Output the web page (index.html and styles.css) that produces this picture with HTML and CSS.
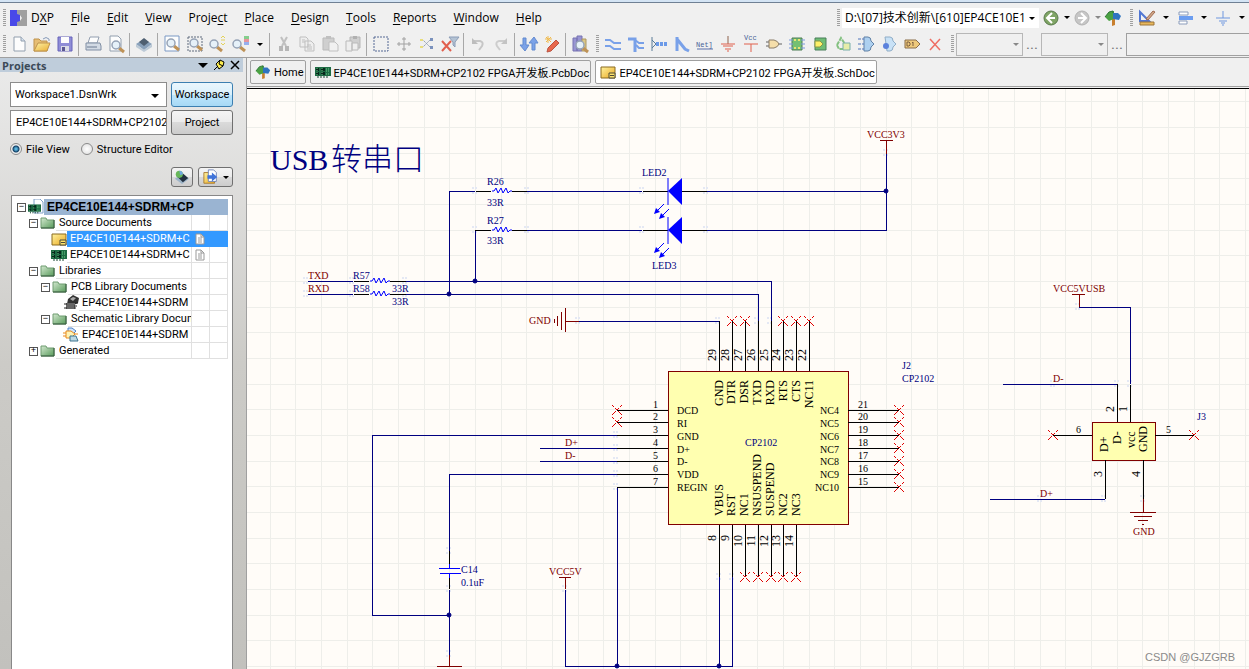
FILE: index.html
```
<!DOCTYPE html>
<html lang="en">
<head>
  <meta charset="UTF-8">
  <meta name="viewport" content="width=device-width, initial-scale=1.0">
  <title>DXP - Schematic Editor</title>
  <link rel="stylesheet" href="styles.css">
</head>
<body>
  <!-- shared symbols -->
  <svg class="defs" aria-hidden="true">
    <defs>
      <linearGradient id="gFolder" x1="0" y1="0" x2="1" y2="1"><stop offset="0" stop-color="#d3e8cf"/><stop offset="1" stop-color="#579a5a"/></linearGradient>
      <linearGradient id="gBlue" x1="0" y1="0" x2="1" y2="1"><stop offset="0" stop-color="#a9cdf8"/><stop offset="1" stop-color="#3f73c9"/></linearGradient>
      <linearGradient id="gYellow" x1="0" y1="0" x2="1" y2="1"><stop offset="0" stop-color="#fff3a0"/><stop offset="1" stop-color="#eaa820"/></linearGradient>
      <symbol id="folder" viewBox="0 0 16 16"><path d="M1 3h5l1 2h7v8H1z" fill="url(#gFolder)" stroke="#6f9c70"/><path d="M1 13h13V5" fill="none" stroke="#33563a"/></symbol>
      <symbol id="sch" viewBox="0 0 16 16"><path d="M1 3h14v11H1z" fill="url(#gYellow)" stroke="#8a6a20"/><path d="M9 9h6v5H9zM10 11.500h4" fill="#ffe36a" stroke="#4b4a3a"/></symbol>
      <symbol id="pcb" viewBox="0 0 16 16"><path d="M0 3h16v9H0z" fill="#1d6b44"/><path d="M1 4h3v3H1zM1 8h3v3H1zM6 4h4v3H6zM6 8h4v3H6z" fill="#07281c"/><path d="M2 4v8M7 4v8M11 5h4M11 7h4M11 10h4" stroke="#6fd08a" stroke-dasharray="1 1"/><path d="M3 12v2M6 12v2M9 12v2M12 12v2" stroke="#16442f"/></symbol>
      <symbol id="page" viewBox="0 0 16 16"><path d="M4 3h5l3 3v7H4z" fill="#fff" stroke="#999"/><path d="M6 7h4M6 9h4M6 11h4M9 3v3h3" fill="none" stroke="#999"/></symbol>
      <symbol id="home" viewBox="0 0 18 18"><path d="M8 9h3v7l-3 1z" fill="#c87f2e"/><path d="M1 8l4-5 5-1v8l-5 2z" fill="#4ba243"/><path d="M9 4h5l3 3-2 4-6-1z" fill="#2f74c0"/><path d="M9 4V2L5 3 1 8" fill="none" stroke="#2c7235"/></symbol>
      <symbol id="lens" viewBox="0 0 18 18"><path d="M11 11l5 4" stroke="#b98847" stroke-width="3"/><circle cx="8" cy="8" r="4" fill="#e5f2fb" stroke="#8d9bb0" stroke-width="1.500"/></symbol>
      <symbol id="chipstack" viewBox="0 0 18 18"><path d="M1 9l8-5 8 5-8 6z" fill="#7d98b5"/><path d="M1 9v3l8 5 8-5V9l-8 6z" fill="#b7c6d4"/><path d="M4 7l5-4 5 4-5 4z" fill="#3d5064"/></symbol>
      <g id="hot" fill="#e4e8f4"><path d="M-4-4h2v2h-2zM-1-4h2v2h-2zM-4 1h2v2h-2zM-1 1h2v2h-2z"/></g>
      <path id="zigzag" d="M-9 0h2l2-3 2 5 3-5 2 5 3-5 2 5 2-2h2"/>
      <g id="led"><path d="M668 178v27" stroke="#00f"/><path d="M668 191l14-13v27z" fill="#00f"/><path d="M664 204l-6 6M669 209l-6 6" stroke="#00f"/><path d="M654 214l2-6 4 4zM659 219l2-6 4 4z" fill="#00f"/></g>
    </defs>
  </svg>

  <header class="top">
    <nav class="menubar">
      <span class="grip"></span>
      <svg class="logo" viewBox="0 0 18 16"><path d="M0 0h10v16H0z" fill="#4848e8"/><path d="M7 0h10v16H7v-4l3-1 2-3-2-3-3-1z" fill="#a0a0a0"/><path d="M7 5l3 1v4l-3 1z" fill="#4848e8"/></svg>
      <div class="menus">
        <button>D<u>X</u>P</button>
        <button><u>F</u>ile</button>
        <button><u>E</u>dit</button>
        <button><u>V</u>iew</button>
        <button>Proje<u>c</u>t</button>
        <button><u>P</u>lace</button>
        <button><u>D</u>esign</button>
        <button><u>T</u>ools</button>
        <button><u>R</u>eports</button>
        <button><u>W</u>indow</button>
        <button><u>H</u>elp</button>
      </div>
      <div class="nav-tools">
        <span class="grip"></span>
        <div class="combo path"><select aria-label="Document path"><option>D:\[07]技术创新\[610]EP4CE10E144</option></select></div>
        <div class="history">
          <button class="tool" aria-label="Back"><svg viewBox="0 0 18 18"><circle cx="9" cy="9" r="7" fill="#7fa465" stroke="#58794a"/><path d="M10 4L5 9l5 5M5 9h8" fill="none" stroke="#fff" stroke-width="2"/></svg></button>
          <button class="drop" aria-label="Back history"></button>
          <button class="tool" aria-label="Forward"><svg viewBox="0 0 18 18"><circle cx="9" cy="9" r="7" fill="#c6c6c6" stroke="#b2b2b2"/><path d="M8 4l5 5-5 5M13 9H5" fill="none" stroke="#fff" stroke-width="2"/></svg></button>
          <button class="drop off" aria-label="Forward history"></button>
          <button class="tool" aria-label="Home page"><svg><use href="#home"/></svg></button>
        </div>
        <span class="grip second"></span>
        <button class="tool" aria-label="Drawing tools"><svg viewBox="0 0 18 18"><path d="M2 3v9h9z" fill="none" stroke="#5277d3" stroke-width="2"/><path d="M2 13h14v3H2z" fill="#e8b85c" stroke="#9c7538"/><path d="M8 10l7-8 2 1-7 8z" fill="#d0a888" stroke="#a06a50"/></svg></button>
        <button class="drop" aria-label="More drawing tools"></button>
        <button class="tool" aria-label="Align"><svg viewBox="0 0 18 18"><path d="M3 3h9v3H3zM3 12h8v3H3z" fill="#fff" stroke="#8b9cbb"/><path d="M3 7h14v4H3z" fill="#6b9df0"/></svg></button>
        <button class="drop" aria-label="More alignment"></button>
        <button class="tool" aria-label="Power sources"><svg viewBox="0 0 18 18"><path d="M9 2v7M2 9h14M5 12h8M7 14h4M8 16h2" stroke="#6f97df" fill="none"/></svg></button>
        <button class="drop" aria-label="More power sources"></button>
      </div>
    </nav>

    <div class="toolbar">
      <span class="grip"></span>
      <button class="tool" aria-label="New"><svg viewBox="0 0 18 18"><path d="M4 2h7l4 4v10H4z" fill="#fff" stroke="#8897a8"/><path d="M11 2v4h4" fill="#d5e2ef" stroke="#8897a8"/></svg></button>
      <button class="tool" aria-label="Open"><svg viewBox="0 0 18 18"><path d="M1 4h5l2 2h6v10H1z" fill="#e6b967" stroke="#b98a3c"/><path d="M1 16l4-8h12l-3 8z" fill="url(#gYellow)" stroke="#b98a3c"/><path d="M10 4q3-3 6 0v2" fill="none" stroke="#7d93b5"/></svg></button>
      <button class="tool" aria-label="Save"><svg viewBox="0 0 18 18"><path d="M2 2h14v14H2z" fill="#8583d4" stroke="#5955b5"/><path d="M5 2h8v6H5z" fill="#fff"/><path d="M5 11h8v5H5z" fill="#d9dbe6"/><path d="M6 12h3v4H6z" fill="#4a4788"/></svg></button>
      <span class="sep"></span>
      <button class="tool" aria-label="Print"><svg viewBox="0 0 18 18"><path d="M6 2h9l-2 6H4z" fill="#fff" stroke="#8a97aa"/><path d="M2 8h14l1 3v4H2z" fill="#cfd8e3" stroke="#74849c"/><path d="M3 12h10" stroke="#5f6f88"/></svg></button>
      <button class="tool" aria-label="Print preview"><svg viewBox="0 0 18 18"><path d="M3 1h8l3 3v12H3z" fill="#fff" stroke="#8897a8"/><use href="#lens" x="1" y="2"/></svg></button>
      <span class="sep"></span>
      <button class="tool" aria-label="Devices"><svg><use href="#chipstack"/></svg></button>
      <span class="sep"></span>
      <button class="tool" aria-label="Fit document"><svg viewBox="0 0 18 18"><path d="M2 1h14v15H2z" fill="#fff" stroke="#6f90c0"/><use href="#lens"/></svg></button>
      <button class="tool" aria-label="Zoom area"><svg viewBox="0 0 18 18"><path d="M2 2h14v14H2z" fill="none" stroke="#505c70" stroke-dasharray="2 1"/><use href="#lens"/></svg></button>
      <button class="tool" aria-label="Zoom selected"><svg viewBox="0 0 18 18"><use href="#lens" x="-3" y="1"/><path d="M12 3l2-2 2 2M12 8l2 2 2-2M12 5h4" stroke="#e2cf4a" fill="none"/></svg></button>
      <button class="tool" aria-label="Zoom filtered"><svg viewBox="0 0 18 18"><use href="#lens" x="-3" y="1"/><path d="M12 1h5v3h-5z" fill="#7acb83"/><path d="M12 4h5v3h-5z" fill="#e58b93"/><path d="M12 7h5v3h-5z" fill="#8da9ef"/></svg></button>
      <button class="drop" aria-label="Zoom options"></button>
      <span class="sep"></span>
      <button class="tool" aria-label="Cut"><svg viewBox="0 0 18 18"><path d="M6 2l5 9M12 2l-5 9" stroke="#bbb" stroke-width="2"/><path d="M5 12h2v3H5zM11 12h2v3h-2z" fill="none" stroke="#b0b0b0" stroke-width="2"/></svg></button>
      <button class="tool" aria-label="Copy"><svg viewBox="0 0 18 18"><path d="M2 2h6l2 2v8H2zM7 6h6l3 3v7H7z" fill="#eee" stroke="#bbb"/><path d="M4 5h3M4 7h3M9 10h4M9 12h5M9 14h5" stroke="#bbb"/></svg></button>
      <button class="tool" aria-label="Paste"><svg viewBox="0 0 18 18"><path d="M2 3h11v12H2z" fill="#ccc" stroke="#b5b5b5"/><path d="M5 1h5v3H5z" fill="#bbb"/><path d="M8 7h6l3 3v6H8z" fill="#f2f2f2" stroke="#bbb"/></svg></button>
      <button class="tool" aria-label="Paste array"><svg viewBox="0 0 18 18"><path d="M6 2h10v11H6z" fill="#ccc" stroke="#b0b0b0"/><path d="M9 1h4v3H9z" fill="#aaa"/><path d="M2 6h6v10H2zM8 8h6v7H8z" fill="#eee" stroke="#b5b5b5"/></svg></button>
      <span class="sep"></span>
      <button class="tool" aria-label="Select area"><svg viewBox="0 0 18 18"><path d="M2 2h14v14H2z" fill="none" stroke="#43598a" stroke-dasharray="2 1"/></svg></button>
      <button class="tool" aria-label="Move"><svg viewBox="0 0 18 18"><path d="M9 2v14M2 9h14M7 4h4M7 14h4M4 7v4M14 7v4" stroke="#999"/></svg></button>
      <button class="tool" aria-label="Deselect"><svg viewBox="0 0 18 18"><path d="M4 4l8 8M4 13l8-8" stroke="#8393a8" stroke-dasharray="2 1"/><path d="M12 3h3v3h-3zM12 11h3v3h-3z" fill="#6f88b8"/><path d="M2 4h3v2H2zM2 11h3v2H2z" fill="#e9dd70"/></svg></button>
      <button class="tool" aria-label="Clear filter"><svg viewBox="0 0 18 18"><path d="M8 2h10l-4 5v5l-2-2V7z" fill="#aebfd2" stroke="#8296b2"/><path d="M1 6l9 10M10 6L1 16" stroke="#e0503c" stroke-width="2"/></svg></button>
      <span class="sep"></span>
      <button class="tool" aria-label="Undo"><svg viewBox="0 0 18 18"><path d="M5 6h6q4 1 2 5l-3 4" fill="none" stroke="#c2c2c2" stroke-width="2"/><path d="M3 3v6h6z" fill="#b8b8b8"/></svg></button>
      <button class="tool" aria-label="Redo"><svg viewBox="0 0 18 18"><path d="M13 6H7q-4 1-2 5l3 4" fill="none" stroke="#cacaca" stroke-width="2"/><path d="M15 3v6H9z" fill="#c0c0c0"/></svg></button>
      <span class="sep"></span>
      <button class="tool" aria-label="Up down hierarchy"><svg viewBox="0 0 18 18"><path d="M3 3h3v7h3l-4 6-5-6h3zM12 15h3V8h3l-4-6-5 6h3z" fill="#6f9ae8" stroke="#5580cc"/></svg></button>
      <button class="tool" aria-label="Cross probe"><svg viewBox="0 0 18 18"><path d="M5 13l8-8 3 3-8 8-4 1z" fill="#e85a3c" stroke="#b54531"/><path d="M2 4h7M5 1v7M3 2l5 5M8 2L3 7" stroke="#f0b53a"/></svg></button>
      <span class="sep"></span>
      <button class="tool" aria-label="Browse library"><svg viewBox="0 0 18 18"><path d="M2 3h4v13H2zM6 1h5v15H6z" fill="#8f8cd0" stroke="#6a66ac"/><path d="M11 4h4v12h-4z" fill="#d9c37a" stroke="#a68f55"/><use href="#lens" x="1" y="2"/></svg></button>
      <span class="grip second"></span>
      <button class="tool" aria-label="Wire"><svg viewBox="0 0 18 18"><path d="M1 5h5l4 3h7M1 11h5l4 3h7" fill="none" stroke="#6c98e8" stroke-width="2"/></svg></button>
      <button class="tool" aria-label="Bus"><svg viewBox="0 0 18 18"><path d="M1 4h7v13" fill="none" stroke="#6c98e8" stroke-width="3"/><path d="M8 5l4 3h5M9 10l3 3h5" fill="none" stroke="#6c98e8" stroke-width="2"/></svg></button>
      <button class="tool" aria-label="Signal harness"><svg viewBox="0 0 18 18"><path d="M2 2v14M2 5l4 4-4 4" fill="none" stroke="#4a7090"/><path d="M6 9h12" stroke="#5e91e8" stroke-width="4" stroke-dasharray="3 1"/></svg></button>
      <button class="tool" aria-label="Bus entry"><svg viewBox="0 0 18 18"><path d="M4 2v14M4 4l8 10 4 2" fill="none" stroke="#6c98e8" stroke-width="3"/></svg></button>
      <button class="tool" aria-label="Net label"><svg viewBox="0 0 18 18"><text x="0" y="12" class="icon-text">Net]</text><path d="M1 14h16" stroke="#4b65a5"/></svg></button>
      <button class="tool" aria-label="GND port"><svg viewBox="0 0 18 18"><path d="M9 1v8" stroke="#84543d"/><path d="M2 9h14M4 11h10M6 14h6M8 16h2" stroke="#e0523c"/></svg></button>
      <button class="tool" aria-label="VCC port"><svg viewBox="0 0 18 18"><text x="2" y="5" class="icon-text">Vcc</text><path d="M2 9h14M9 9v8" stroke="#e0523c" fill="none"/></svg></button>
      <button class="tool" aria-label="Part"><svg viewBox="0 0 18 18"><path d="M1 7h3M1 11h3M13 9h4" stroke="#555"/><path d="M4 5h5q4 1 5 4-1 3-5 4H4z" fill="#f6dda3" stroke="#80705a"/></svg></button>
      <button class="tool" aria-label="Sheet symbol"><svg viewBox="0 0 18 18"><path d="M4 3h10v12H4z" fill="#67bb65" stroke="#3d7045"/><path d="M1 5h4M1 9h4M1 13h4M13 5h4M13 9h4M13 13h4" stroke="#6f91d8"/><path d="M6 5h2M10 5h2M6 13h2M10 13h2" stroke="#e8e366" stroke-width="2"/></svg></button>
      <button class="tool" aria-label="Sheet entry"><svg viewBox="0 0 18 18"><path d="M4 3h11v12H4z" fill="#62b868" stroke="#38724a"/><path d="M4 6h5l3 3-3 3H4z" fill="#fff15a" stroke="#7f8b38"/></svg></button>
      <button class="tool" aria-label="Device sheet"><svg viewBox="0 0 18 18"><path d="M3 10l4-7 4 6M3 10l2 4h4" fill="none" stroke="#78bd75" stroke-width="2" stroke-dasharray="4 1"/><path d="M9 8h7v7H9z" fill="#e5eda1" stroke="#6da8a4"/></svg></button>
      <button class="tool" aria-label="Harness connector"><svg viewBox="0 0 18 18"><path d="M7 2h4q3 0 3 4l3 3-3 3q0 4-3 4H7z" fill="#a6cdf1" stroke="#52779e"/><path d="M1 4h6M1 9h6M1 14h6" stroke="#3e69b8" stroke-dasharray="3 1"/></svg></button>
      <button class="tool" aria-label="Harness entry"><svg viewBox="0 0 18 18"><path d="M5 2h5q3 0 3 4l3 3-3 3q0 4-3 4H7z" fill="#c4e0f7" stroke="#86a7c4"/><circle cx="6" cy="11" r="3" fill="#4b76da"/></svg></button>
      <button class="tool" aria-label="Port"><svg viewBox="0 0 18 18"><path d="M2 5h11l4 4-4 4H2z" fill="#eec56f" stroke="#80613b"/><path d="M4 7v4h2l1-1V8L6 7zM9 8l1-1v4" fill="none" stroke="#705030"/></svg></button>
      <button class="tool" aria-label="No ERC"><svg viewBox="0 0 18 18"><path d="M4 4l10 11M14 4L4 15" stroke="#ee6055" stroke-width="1.500"/></svg></button>
      <span class="grip second"></span>
      <div class="combo filter"><select aria-label="Filter one" disabled></select></div>
      <span class="dots">...</span>
      <div class="combo filter"><select aria-label="Filter two" disabled></select></div>
      <span class="dots">...</span>
      <input class="filter-text" aria-label="Filter text" disabled>
    </div>
  </header>

  <main class="workarea">
    <aside class="panel">
      <div class="panel-head">
        <h2>Projects</h2>
        <button aria-label="Panel menu"><svg viewBox="0 0 12 12"><path d="M1 4h10L6 9z"/></svg></button>
        <button aria-label="Pin panel"><svg viewBox="0 0 12 12"><path d="M1 11l4-4" stroke="#000"/><path d="M3 5l4-4 4 2-1 4-4 3z" fill="#ffef50" stroke="#000"/><path d="M7 1l-1 4 4 2" fill="none" stroke="#000"/></svg></button>
        <button aria-label="Close panel"><svg viewBox="0 0 12 12"><path d="M2 2l8 8M10 2l-8 8" stroke="#000" stroke-width="1.500"/></svg></button>
      </div>
      <div class="panel-body">
        <div class="row">
          <div class="combo workspace"><select aria-label="Workspace"><option>Workspace1.DsnWrk</option></select></div>
          <button class="btn primary">Workspace</button>
        </div>
        <div class="row">
          <input class="field" aria-label="Project name" value="EP4CE10E144+SDRM+CP2102">
          <button class="btn">Project</button>
        </div>
        <div class="radios">
          <label><input type="radio" name="mode" checked>File View</label>
          <label><input type="radio" name="mode">Structure Editor</label>
        </div>
        <div class="panel-icons">
          <button class="btn" aria-label="Compile"><svg viewBox="0 0 18 18"><path d="M1 11l8-5 8 5-8 6z" fill="#9db4c8"/><path d="M4 9l6-4 6 5-6 5z" fill="#223040"/><circle cx="6" cy="6" r="4" fill="#68b75a"/><path d="M6 2q4 0 4 4l-3 1z" fill="#6fa8e0"/></svg></button>
          <button class="btn split" aria-label="Open document"><svg viewBox="0 0 18 18"><path d="M1 4h6l1 2h5v10H1z" fill="url(#gYellow)" stroke="#a5762a"/><path d="M6 1h6l3 3v10H6z" fill="#fff" stroke="#6d82b5"/><path d="M5 7h5V4l6 5-6 5v-3H5z" fill="#3f73d9"/></svg><i></i></button>
        </div>
        <ul class="tree">
          <li class="root"><b class="box">−</b><svg viewBox="0 0 16 16"><path d="M6 0h6l3 3v11H6z" fill="#fff" stroke="#7fa0c8"/><use href="#pcb" y="3" width="13" height="13"/></svg><span>EP4CE10E144+SDRM+CP</span></li>
          <li class="l1"><b class="box">−</b><svg><use href="#folder"/></svg><span>Source Documents</span><i></i><i></i></li>
          <li class="l2 file selected"><svg><use href="#sch"/></svg><span>EP4CE10E144+SDRM+C</span><i><svg><use href="#page"/></svg></i><i></i></li>
          <li class="l2 file"><svg><use href="#pcb"/></svg><span>EP4CE10E144+SDRM+C</span><i><svg><use href="#page"/></svg></i><i></i></li>
          <li class="l1"><b class="box">−</b><svg><use href="#folder"/></svg><span>Libraries</span><i></i><i></i></li>
          <li class="l2"><b class="box">−</b><svg><use href="#folder"/></svg><span>PCB Library Documents</span><i></i><i></i></li>
          <li class="l3 file"><svg viewBox="0 0 16 16"><path d="M5 4l5-4 6 3-1 5-6 3-5-2z" fill="#333"/><path d="M7 4l3-2 3 1-3 3z" fill="#aaa"/><path d="M3 8h9v6H3z" fill="#666"/><path d="M1 9h3M1 13h3M11 11h3M12 8h3M11 13h2" stroke="#222"/></svg><span>EP4CE10E144+SDRM</span><i></i><i></i></li>
          <li class="l2"><b class="box">−</b><svg><use href="#folder"/></svg><span>Schematic Library Docum</span><i></i><i></i></li>
          <li class="l3 file"><svg viewBox="0 0 16 16"><path d="M5 1h4l4 3-3 3H5z" fill="#cfe2fa" stroke="#4e82c8"/><path d="M3 4h5l4 3-4 4H3zM0 6h3M0 9h3M12 7h3" fill="#fff3b5" stroke="#e88a1c"/><path d="M7 9h6l2 5H7z" fill="#bdd8e4" stroke="#3c7590"/></svg><span>EP4CE10E144+SDRM</span><i></i><i></i></li>
          <li class="l1"><b class="box">+</b><svg><use href="#folder"/></svg><span>Generated</span><i></i><i></i></li>
        </ul>
      </div>
    </aside>

    <section class="editor">
      <div class="tabs">
        <button><svg><use href="#home"/></svg>Home</button>
        <button><svg><use href="#pcb"/></svg>EP4CE10E144+SDRM+CP2102 FPGA开发板.PcbDoc</button>
        <button class="active"><svg><use href="#sch"/></svg>EP4CE10E144+SDRM+CP2102 FPGA开发板.SchDoc</button>
      </div>
      <div class="sheet">
        <svg class="schematic" role="img" aria-label="USB to serial schematic">
          <defs>
            <pattern id="grid" width="77" height="77" patternUnits="userSpaceOnUse" x="270" y="101">
              <path d="M0 0h1v77H0zM25 0h1v77h-1zM51 0h1v77h-1zM0 0h77v1H0zM0 26h77v1H0zM0 52h77v1H0z" fill="#eeeeea"/>
            </pattern>
          </defs>
          <g transform="translate(-247 -89)">
            <rect x="247" y="89" width="3000" height="3000" fill="url(#grid)"/>

            <!-- electrical hotspots -->
            <use href="#hot" x="476" y="191"/><use href="#hot" x="528" y="191"/><use href="#hot" x="476" y="230"/><use href="#hot" x="528" y="230"/>
            <use href="#hot" x="643" y="191"/><use href="#hot" x="707" y="191"/><use href="#hot" x="643" y="230"/><use href="#hot" x="707" y="230"/>
            <use href="#hot" x="307" y="281"/><use href="#hot" x="307" y="294"/><use href="#hot" x="353" y="281"/><use href="#hot" x="353" y="294"/>
            <use href="#hot" x="406" y="281"/><use href="#hot" x="406" y="294"/><use href="#hot" x="579" y="321"/><use href="#hot" x="719" y="321"/>
            <use href="#hot" x="758" y="321"/><use href="#hot" x="771" y="321"/><use href="#hot" x="887" y="153"/><use href="#hot" x="617" y="435"/>
            <use href="#hot" x="617" y="448"/><use href="#hot" x="617" y="461"/><use href="#hot" x="617" y="474"/><use href="#hot" x="617" y="487"/>
            <use href="#hot" x="450" y="551"/><use href="#hot" x="450" y="589"/><use href="#hot" x="450" y="654"/><use href="#hot" x="566" y="589"/>
            <use href="#hot" x="720" y="577"/><use href="#hot" x="733" y="577"/><use href="#hot" x="1079" y="307"/><use href="#hot" x="1118" y="384"/>
            <use href="#hot" x="1131" y="384"/><use href="#hot" x="1054" y="384"/><use href="#hot" x="1041" y="499"/><use href="#hot" x="1105" y="499"/><use href="#hot" x="1144" y="499"/>

            <!-- wires -->
            <path class="wire" d="M449 294V191h26M475 281v-51h1M527 191h115M527 230h115M707 191h179M707 230h179v-77
              M308 281h45M308 294h45M406 281h365v40M406 294h352v27M579 321h140
              M617 435H372v180h77M540 448h77M540 461h77M617 474H449v77M449 590v65M617 487v179M565 590v76h167v-89M719 577v89
              M1079 307h51v77M1003 384h114M990 499h115"/>
            <g class="joint">
              <circle cx="886" cy="191" r="2"/><circle cx="475" cy="281" r="2"/><circle cx="449" cy="294" r="2"/><circle cx="449" cy="615" r="2"/><circle cx="617" cy="666" r="2"/><circle cx="719" cy="666" r="2"/>
            </g>

            <!-- resistors, leds, capacitor -->
            <path class="pin" d="M476 191h15M512 191h15M475 230h16M512 230h15M354 281h15M390 281h16M354 294h15M390 294h16
              M643 191h25M682 191h25M643 230h25M682 230h25M449 551v13M449 578v11"/>
            <g class="part">
              <use href="#zigzag" x="501" y="191"/><use href="#zigzag" x="501" y="230"/><use href="#zigzag" x="379" y="281"/><use href="#zigzag" x="379" y="294"/>
              <path d="M439 568h21M440 573h21M449 564v4M449 573v5"/>
            </g>
            <use href="#led"/><use href="#led" y="39"/>

            <!-- power ports -->
            <path class="power" d="M880 140h13M886 140v14M565 321h14M565 308v24M561 312v18M557 316v10M554 319v4
              M437 666h25M449 655v11M559 577h12M565 577v12M1072 294h13M1079 294v13M1143 499v13M1130 512h26M1134 516h18M1138 520h10M1142 524h2"/>

            <!-- CP2102 -->
            <rect class="body" x="668" y="371" width="180" height="153"/>
            <path class="pin" d="M617 410h51M617 422h51M617 435h51M617 448h51M617 461h51M617 474h51M617 487h51
              M848 410h51M848 422h51M848 435h51M848 448h51M848 461h51M848 474h51M848 487h51
              M719 321v50M732 321v50M745 321v50M758 321v50M771 321v50M783 321v50M796 321v50M809 321v50
              M719 525v52M732 525v52M745 525v52M758 525v52M771 525v52M783 525v52M796 525v52"/>
            <g class="pin-text">
              <text x="677" y="414">DCD</text><text x="677" y="427">RI</text><text x="677" y="440">GND</text><text x="677" y="453">D+</text><text x="677" y="465">D-</text><text x="677" y="478">VDD</text><text x="677" y="491">REGIN</text>
              <text x="653" y="408">1</text><text x="653" y="420">2</text><text x="653" y="433">3</text><text x="653" y="446">4</text><text x="653" y="459">5</text><text x="653" y="472">6</text><text x="653" y="485">7</text>
              <text x="858" y="408">21</text><text x="858" y="420">20</text><text x="858" y="433">19</text><text x="858" y="446">18</text><text x="858" y="459">17</text><text x="858" y="472">16</text><text x="858" y="485">15</text>
              <text x="1076" y="433">6</text><text x="1166" y="433">5</text>
            </g>
            <g class="pin-text end">
              <text x="839" y="414">NC4</text><text x="839" y="427">NC5</text><text x="839" y="440">NC6</text><text x="839" y="453">NC7</text><text x="839" y="465">NC8</text><text x="839" y="478">NC9</text><text x="839" y="491">NC10</text>
            </g>
            <!-- rotated: x is -y on the sheet, y is x on the sheet -->
            <g class="pin-text big" transform="rotate(-90)">
              <text x="-361" y="716">29</text><text x="-361" y="729">28</text><text x="-361" y="742">27</text><text x="-361" y="755">26</text><text x="-361" y="768">25</text><text x="-361" y="780">24</text><text x="-361" y="793">23</text><text x="-361" y="806">22</text>
              <text x="-516" y="723">VBUS</text><text x="-516" y="735">RST</text><text x="-516" y="748">NC1</text><text x="-516" y="761">NSUSPEND</text><text x="-516" y="774">SUSPEND</text><text x="-516" y="787">NC2</text><text x="-516" y="800">NC3</text>
            </g>
            <g class="pin-text big end" transform="rotate(-90)">
              <text x="-380" y="723">GND</text><text x="-380" y="735">DTR</text><text x="-380" y="748">DSR</text><text x="-380" y="761">TXD</text><text x="-380" y="774">RXD</text><text x="-380" y="787">RTS</text><text x="-380" y="800">CTS</text><text x="-380" y="813">NC11</text>
              <text x="-535" y="716">8</text><text x="-535" y="729">9</text><text x="-535" y="742">10</text><text x="-535" y="755">11</text><text x="-535" y="768">12</text><text x="-535" y="780">13</text><text x="-535" y="793">14</text>
            </g>

            <!-- J3 -->
            <rect class="body" x="1092" y="422" width="63" height="38"/>
            <path class="pin" d="M1053 435h39M1155 435h39M1117 384v38M1130 385v37M1105 460v39M1143 460v39"/>
            <g class="pin-text big" transform="rotate(-90)">
              <text x="-412" y="1114">2</text><text x="-412" y="1127">1</text><text x="-477" y="1102">3</text><text x="-477" y="1140">4</text>
              <text x="-452" y="1108">D+</text><text x="-444" y="1121">D-</text><text x="-448" y="1135">vcc</text><text x="-452" y="1147">GND</text>
            </g>

            <!-- no-connect marks -->
            <g class="nc">
              <path id="nx" d="M612 405l10 10M622 405l-10 10"/>
              <use href="#nx" y="12"/><use href="#nx" x="436" y="25"/><use href="#nx" x="577" y="25"/>
              <use href="#nx" x="282"/><use href="#nx" x="282" y="12"/><use href="#nx" x="282" y="25"/><use href="#nx" x="282" y="38"/><use href="#nx" x="282" y="51"/><use href="#nx" x="282" y="64"/><use href="#nx" x="282" y="77"/>
              <use href="#nx" x="115" y="-89"/><use href="#nx" x="128" y="-89"/><use href="#nx" x="166" y="-89"/><use href="#nx" x="179" y="-89"/><use href="#nx" x="192" y="-89"/>
              <use href="#nx" x="128" y="167"/><use href="#nx" x="141" y="167"/><use href="#nx" x="154" y="167"/><use href="#nx" x="166" y="167"/><use href="#nx" x="179" y="167"/>
            </g>

            <g class="label">
              <text x="487" y="185">R26</text><text x="487" y="206">33R</text><text x="487" y="224">R27</text><text x="487" y="244">33R</text>
              <text x="353" y="279">R57</text><text x="353" y="292">R58</text><text x="392" y="292">33R</text><text x="392" y="305">33R</text>
              <text x="642" y="176">LED2</text><text x="652" y="269">LED3</text><text x="902" y="369">J2</text><text x="902" y="382">CP2102</text><text x="745" y="446">CP2102</text>
              <text x="461" y="573">C14</text><text x="461" y="586">0.1uF</text><text x="1197" y="420">J3</text>
            </g>
            <g class="net">
              <text x="308" y="279">TXD</text><text x="308" y="292">RXD</text><text x="867" y="138">VCC3V3</text><text x="529" y="324">GND</text><text x="565" y="446">D+</text><text x="565" y="459">D-</text>
              <text x="549" y="575">VCC5V</text><text x="1053" y="292">VCC5VUSB</text><text x="1053" y="382">D-</text><text x="1040" y="497">D+</text><text x="1133" y="535">GND</text>
            </g>
            <text class="title" x="270" y="170">USB<tspan class="cjk" x="331">转串口</tspan></text>
          </g>
        </svg>
        <span class="watermark">CSDN @GJZGRB</span>
      </div>
    </section>
  </main>
</body>
</html>
```
FILE: styles.css
```
* {
  box-sizing: border-box;
}
body {
  font-family: Roboto, "Noto Sans CJK SC", sans-serif;
  font-size: 11px;
  color: #000;
  background: #f0f0f0;
  margin: 0;
  height: 100vh;
  display: flex;
  flex-direction: column;
  overflow: hidden;
}
button, input, select {
  font: inherit;
  color: inherit;
  margin: 0;
}
button {
  border: none;
  background: none;
  padding: 0;
}
.defs {
  position: absolute;
  width: 0;
  height: 0;
}

/* menu and toolbars */
.top {
  border-top: 2px solid #d4e4f4;
  box-shadow: inset 0 1px #6f8094;
  border-bottom: 1px solid #a0a0a0;
}
.menubar {
  display: flex;
  align-items: center;
  height: 29px;
  padding: 2px 0 0 3px;
  font-family: "Open Sans", "Noto Sans CJK SC", sans-serif;
  font-size: 12px;
}
.menus {
  display: flex;
  gap: 17px;
  margin-left: 3px;
}
.menus button {
  white-space: nowrap;
}
.menubar u {
  text-underline-offset: 2px;
}
.grip {
  width: 3px;
  height: 18px;
  flex: none;
  background: repeating-linear-gradient(#a0a0a0 0 1px, #f0f0f0 1px 2px);
}
.logo {
  width: 18px;
  height: 16px;
  margin-left: 4px;
}
.nav-tools {
  display: flex;
  align-items: center;
  margin-left: auto;
  flex: none;
}
.nav-tools .second {
  margin: 0 2px 0 7px;
}
.history {
  display: flex;
  align-items: center;
}
.toolbar {
  display: flex;
  align-items: center;
  height: 26px;
  padding-left: 3px;
}
.toolbar > .grip {
  margin-right: 1px;
}
.toolbar > .second {
  margin: 0 2px 0 5px;
}
.tool {
  width: 23px;
  height: 22px;
  flex: none;
  display: flex;
  align-items: center;
  justify-content: center;
}
.tool svg {
  width: 18px;
  height: 18px;
  flex: none;
  overflow: visible;
}
.toolbar .tool svg {
  opacity: 0.9;
}
.icon-text {
  font-family: "Liberation Mono", monospace;
  font-size: 7px;
  fill: #33508e;
}
.sep {
  width: 1px;
  height: 23px;
  margin: 0 2px;
  flex: none;
  background: #a8a8a8;
}
.drop {
  width: 15px;
  height: 20px;
  flex: none;
  display: flex;
  align-items: center;
  justify-content: center;
}
.history .tool {
  width: 20px;
}
.history .drop {
  width: 11px;
}
.drop::after, .split i, .combo::after {
  content: "";
  border: 3px solid transparent;
  border-top-color: #000;
  border-bottom: none;
}
.drop.off::after {
  border-top-color: #888;
}
.combo {
  position: relative;
}
.combo::after {
  position: absolute;
  right: 4px;
  top: 50%;
  margin-top: -1px;
  pointer-events: none;
}
.combo select {
  appearance: none;
  width: 100%;
  height: 100%;
  border: none;
  border-radius: 0;
  background: #fff;
  padding: 0 14px 0 3px;
}
.path {
  width: 197px;
  height: 20px;
  flex: none;
  margin: 0 2px;
}
.filter {
  width: 67px;
  height: 23px;
  flex: none;
}
.filter::after {
  border-top-color: #888;
}
.filter select, .filter-text {
  background: #f0f0f0;
  border: 1px solid #a0a0a0;
}
.filter-text {
  flex: 1;
  min-width: 0;
  height: 23px;
  border-right: none;
}
.dots {
  width: 18px;
  flex: none;
  text-align: center;
  font-size: 15px;
  color: #777;
}

/* projects panel */
.workarea {
  display: flex;
  flex: 1;
  min-height: 0;
}
.panel {
  width: 246px;
  flex: none;
  display: flex;
  flex-direction: column;
  background: linear-gradient(#ebebeb, #cccbc7 50%, #c2c1bd);
}
.panel-head {
  display: flex;
  align-items: center;
  height: 14px;
  margin-right: 3px;
  padding: 0 0 0 2px;
  background: #bfcddb;
}
.panel-head h2 {
  flex: 1;
  margin: 0;
  font: bold 11px "Open Sans", sans-serif;
  color: #3c4a58;
}
.panel-head button {
  width: 16px;
  height: 12px;
}
.panel-head svg {
  width: 12px;
  height: 12px;
  display: block;
  margin: auto;
}
.panel-body {
  flex: 1;
  display: flex;
  flex-direction: column;
  padding: 10px 13px 0 10px;
}
.row {
  display: flex;
  gap: 4px;
  height: 25px;
  margin-bottom: 3px;
}
.workspace, .field {
  flex: 1;
  min-width: 0;
  background: #fff;
  border: 1px solid #8c8c8c;
}
.field {
  padding: 0 0 0 5px;
}
.workspace select {
  padding-left: 4px;
}
.workspace::after {
  border-width: 4px;
  border-bottom: none;
  right: 7px;
}
.btn {
  width: 62px;
  border: 1px solid #707070;
  border-radius: 3px;
  background: linear-gradient(#f4f4f4, #ebebeb 50%, #dadada 50%, #cccccc);
}
.primary {
  border-color: #3c7fb1;
  background: linear-gradient(#eaf6fd, #d9f0fc 50%, #bee6fd 50%, #a7d9f5);
}
.radios {
  display: flex;
  gap: 11px;
  height: 22px;
}
.radios label {
  display: flex;
  align-items: center;
  gap: 4px;
}
.radios input {
  appearance: none;
  width: 12px;
  height: 12px;
  border: 1px solid #8a8a8a;
  border-radius: 50%;
  background: radial-gradient(#fff, #dcdcdc);
}
.radios input:checked {
  background: radial-gradient(#59b4dd 0 1px, #123f66 3px, #eee 4px);
}
.panel-icons {
  display: flex;
  justify-content: flex-end;
  gap: 5px;
  height: 20px;
  margin: 7px 0 8px;
}
.panel-icons .btn {
  width: 22px;
  display: flex;
  align-items: center;
  justify-content: center;
}
.panel-icons .split {
  width: 35px;
  gap: 4px;
}
.panel-icons svg {
  width: 16px;
  height: 16px;
  flex: none;
}
.tree {
  flex: 1;
  list-style: none;
  margin: 0 0 0 1px;
  padding: 3px 4px 0 5px;
  background: #fff;
  border: 1px solid #888;
  border-bottom: none;
}
.tree li {
  display: flex;
  align-items: center;
  height: 16px;
}
.tree .l1 { padding-left: 12px; }
.tree .l2 { padding-left: 24px; }
.tree .l3 { padding-left: 36px; }
.tree .file::before {
  content: "";
  width: 10px;
}
.tree .box {
  width: 9px;
  height: 9px;
  flex: none;
  margin-right: 2px;
  border: 1px solid #555;
  font: 9px/7px "Liberation Mono", monospace;
  text-align: center;
}
.tree svg {
  width: 16px;
  height: 16px;
  flex: none;
}
.tree span {
  flex: 1;
  min-width: 0;
  overflow: hidden;
  white-space: nowrap;
  line-height: 15px;
  padding-left: 3px;
  border-bottom: 1px solid #e0e0e0;
}
.tree i {
  width: 18px;
  height: 16px;
  flex: none;
  border: solid #e0e0e0;
  border-width: 0 1px 1px 0;
}
.tree i:first-of-type {
  width: 19px;
  border-left-width: 1px;
}
.tree .root span {
  font: bold 12px/16px "Liberation Sans", sans-serif;
  background: #9ab4d2;
  border-bottom: none;
}
.selected span, .selected i {
  background: #3399ff;
  border-color: #3399ff;
  color: #fff;
}

/* document area */
.editor {
  flex: 1;
  min-width: 0;
  display: flex;
  flex-direction: column;
  border-left: 1px solid #a0a0a0;
}
.tabs {
  display: flex;
  gap: 4px;
  padding: 2px 3px;
  height: 29px;
  border-bottom: 1px solid #a0a0a0;
}
.tabs button {
  display: flex;
  align-items: center;
  gap: 3px;
  height: 24px;
  padding: 0 1px 0 4px;
  border: 1px solid #a0a0a0;
  border-radius: 2px;
  white-space: nowrap;
}
.tabs svg {
  width: 16px;
  height: 16px;
}
.tabs .active {
  background: #fff;
}
.sheet {
  flex: 1;
  min-height: 0;
  position: relative;
  margin-top: 1px;
  border-top: 1px solid #000;
  background: #fffcf8;
}
.schematic {
  display: block;
  width: 100%;
  height: 100%;
  font-family: "Liberation Serif", "Noto Sans CJK SC", serif;
  font-size: 10px;
}
.schematic path, .schematic rect {
  shape-rendering: crispEdges;
}
.wire, .pin, .part, .power, .nc {
  fill: none;
  stroke: #000080;
}
.pin { stroke: #000; }
.part { stroke: #0000ff; }
.power { stroke: #800000; }
.nc {
  stroke: #e00000;
  stroke-dasharray: 3 1;
}
.joint {
  fill: #000080;
  stroke: #000080;
}
.body {
  fill: #ffffb0;
  stroke: #800000;
}
.pin-text { fill: #000; }
.label { fill: #000080; }
.net { fill: #800000; }
.big { font-size: 12px; }
.end { text-anchor: end; }
.title {
  font-size: 30px;
  fill: #000080;
}
.cjk {
  font-size: 31px;
  font-weight: 300;
}
.watermark {
  position: absolute;
  right: 14px;
  bottom: 6px;
  font-family: "Liberation Sans", sans-serif;
  color: #8a8a8a;
}
```
